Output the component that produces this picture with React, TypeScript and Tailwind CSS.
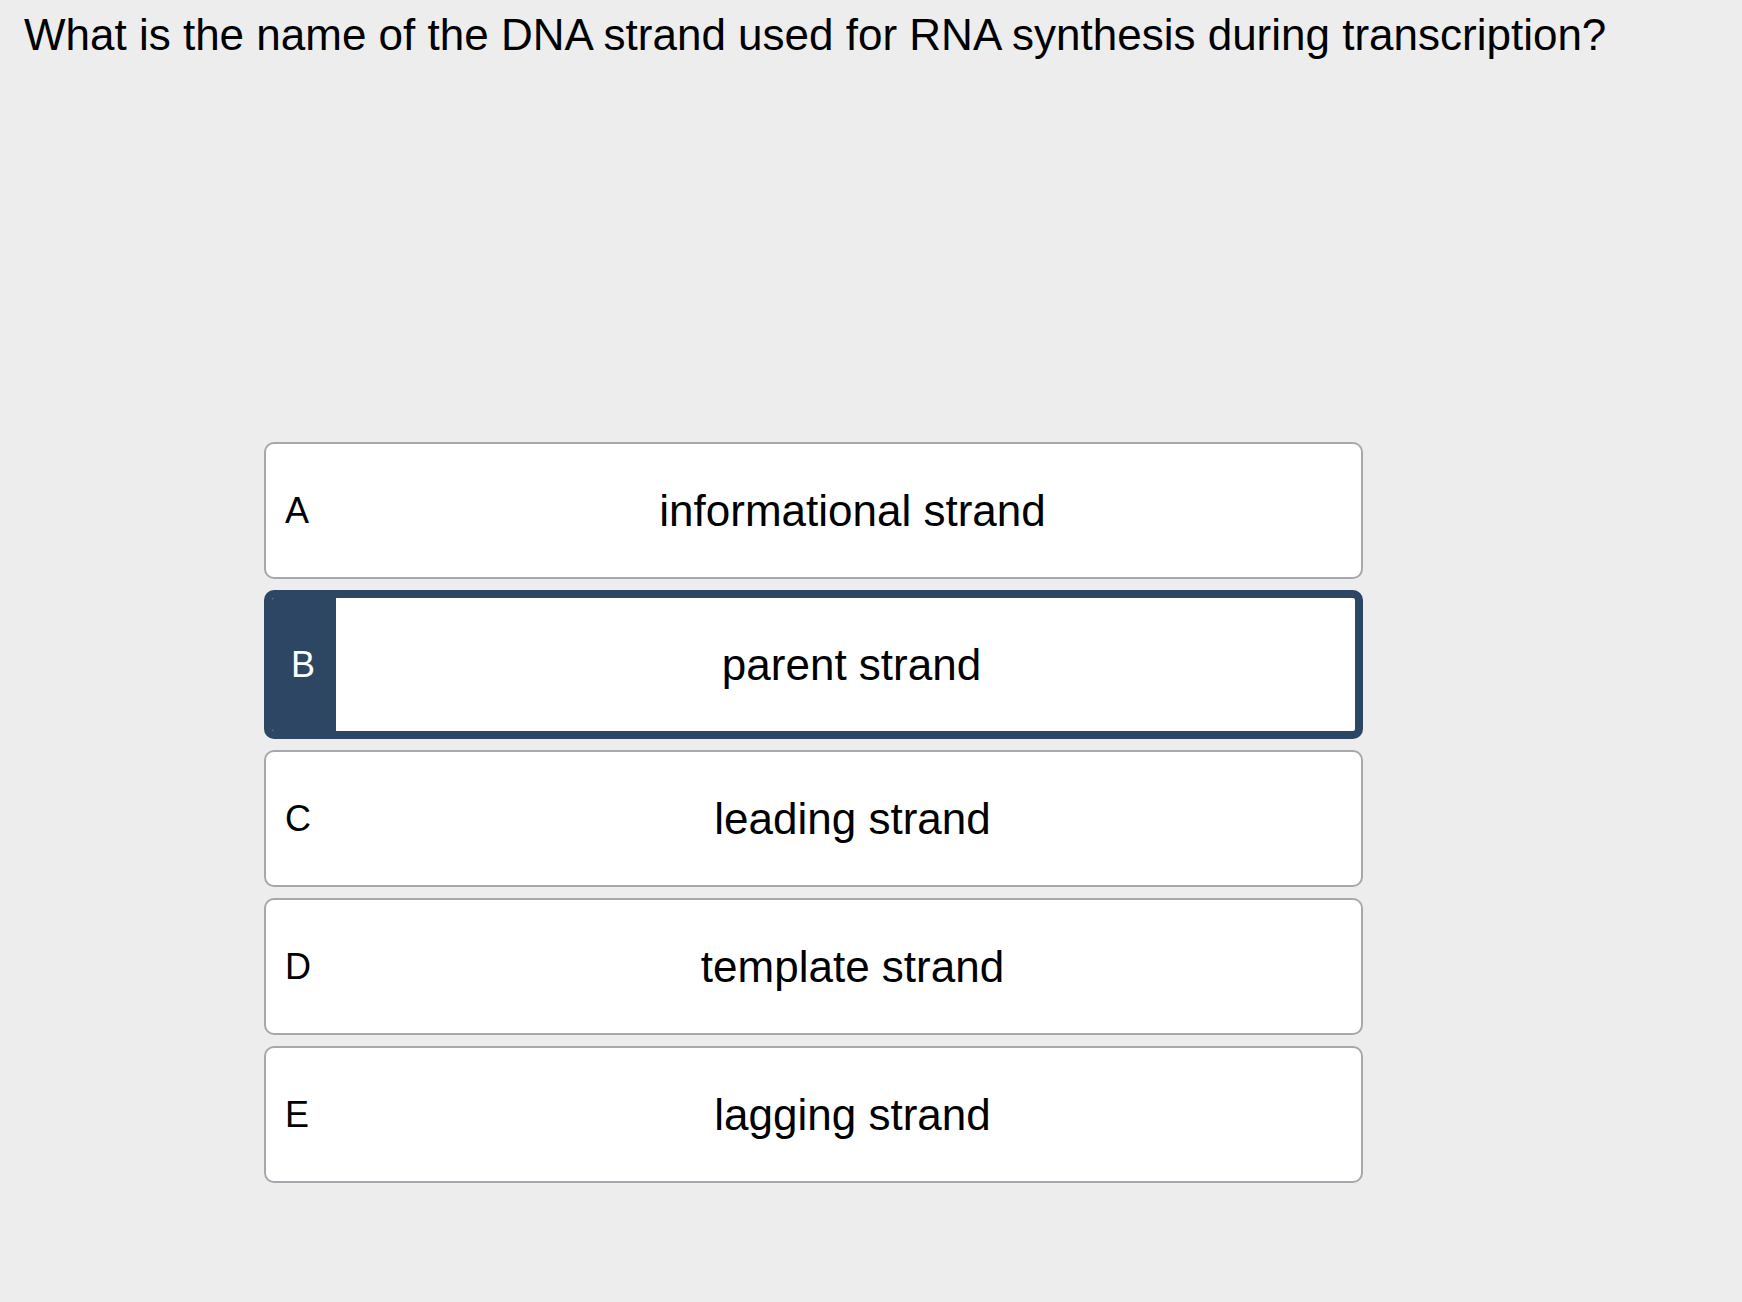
const options = [
  { key: "A", text: "informational strand" },
  { key: "B", text: "parent strand" },
  { key: "C", text: "leading strand" },
  { key: "D", text: "template strand" },
  { key: "E", text: "lagging strand" },
];

const selected = "B";

function Option({ label, text, active }: { label: string; text: string; active: boolean }) {
  if (active) {
    return (
      <div className="flex h-[149px] rounded-[10px] border-[8px] border-[#2c4664] bg-white overflow-hidden">
        <div className="flex w-[64px] items-center bg-[#2c4664] pl-[19px] text-[36px] text-white">{label}</div>
        <div className="flex flex-1 items-center justify-center pl-[12px] text-[44px] text-black">{text}</div>
      </div>
    );
  }
  return (
    <div className="flex h-[137px] rounded-[10px] border-2 border-[#a5a8ac] bg-white">
      <div className="flex w-[70px] items-center pl-[19px] text-[36px] text-black">{label}</div>
      <div className="flex flex-1 items-center justify-center pl-[8px] text-[44px] text-black">{text}</div>
    </div>
  );
}

export default function App() {
  return (
    <div className="min-h-[1302px] bg-[#ededed]" style={{ fontFamily: '"Liberation Sans", Arial, sans-serif' }}>
      {/* QUESTION */}
      <h1 className="pl-[24px] pt-[9px] text-[44px] leading-[51px] font-normal text-black">
        What is the name of the DNA strand used for RNA synthesis during transcription?
      </h1>

      {/* ANSWERS */}
      <div className="ml-[264px] mt-[382px] flex w-[1099px] flex-col gap-[11px]">
        {options.map((o) => (
          <Option key={o.key} label={o.key} text={o.text} active={o.key === selected} />
        ))}
      </div>
    </div>
  );
}
